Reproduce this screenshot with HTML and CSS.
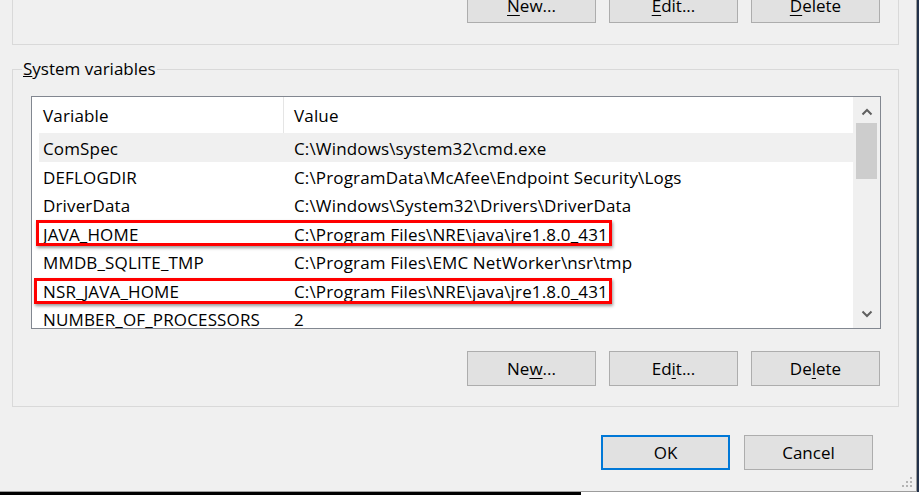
FILE: index.html
```html
<!DOCTYPE html>
<html lang="en">
<head>
<meta charset="utf-8">
<title>Environment Variables</title>
<link rel="stylesheet" href="styles.css">
</head>
<body>
<div class="screen">
  <div class="top">
    <div class="dialog">
      <div class="group user-group">
        <div class="btn-row">
          <button class="btn"><u>N</u>ew...</button>
          <button class="btn"><u>E</u>dit...</button>
          <button class="btn"><u>D</u>elete</button>
        </div>
      </div>

      <fieldset class="group sys-group">
        <legend><u>S</u>ystem variables</legend>
        <div class="list">
          <div class="list-main">
            <div class="list-head">
              <div class="hcell c1">Variable</div>
              <div class="hcell c2">Value</div>
            </div>
            <div class="rows">
              <div class="row selected"><div class="cell c1">ComSpec</div><div class="cell c2">C:\Windows\system32\cmd.exe</div></div>
              <div class="row"><div class="cell c1">DEFLOGDIR</div><div class="cell c2">C:\ProgramData\McAfee\Endpoint Security\Logs</div></div>
              <div class="row"><div class="cell c1">DriverData</div><div class="cell c2">C:\Windows\System32\Drivers\DriverData</div></div>
              <div class="row"><div class="cell c1">JAVA_HOME</div><div class="cell c2">C:\Program Files\NRE\java\jre1.8.0_431</div><span class="mark mark-a"></span></div>
              <div class="row"><div class="cell c1">MMDB_SQLITE_TMP</div><div class="cell c2">C:\Program Files\EMC NetWorker\nsr\tmp</div></div>
              <div class="row"><div class="cell c1">NSR_JAVA_HOME</div><div class="cell c2">C:\Program Files\NRE\java\jre1.8.0_431</div><span class="mark mark-b"></span></div>
              <div class="row"><div class="cell c1">NUMBER_OF_PROCESSORS</div><div class="cell c2">2</div></div>
            </div>
          </div>
          <div class="vscroll">
            <div class="sbtn sbtn-up">
              <svg width="12" height="8" viewBox="0 0 12 8"><polyline points="1.5,6.5 6,2 10.5,6.5" fill="none" stroke="#606060" stroke-width="2"/></svg>
            </div>
            <div class="thumb"></div>
            <div class="track"></div>
            <div class="sbtn sbtn-down">
              <svg width="12" height="8" viewBox="0 0 12 8"><polyline points="1.5,1.5 6,6 10.5,1.5" fill="none" stroke="#606060" stroke-width="2"/></svg>
            </div>
          </div>
        </div>
        <div class="btn-row sys-btns">
          <button class="btn">Ne<u>w</u>...</button>
          <button class="btn">Ed<u>i</u>t...</button>
          <button class="btn">De<u>l</u>ete</button>
        </div>
      </fieldset>

      <div class="dlg-btns">
        <button class="btn btn-default">OK</button>
        <button class="btn">Cancel</button>
      </div>

      <svg class="grip" width="12" height="12" viewBox="0 0 12 12">
        <rect x="8" y="0" width="2" height="2" fill="#b4b4b4"/>
        <rect x="4" y="4" width="2" height="2" fill="#b4b4b4"/>
        <rect x="8" y="4" width="2" height="2" fill="#b4b4b4"/>
        <rect x="0" y="8" width="2" height="2" fill="#b4b4b4"/>
        <rect x="4" y="8" width="2" height="2" fill="#b4b4b4"/>
        <rect x="8" y="8" width="2" height="2" fill="#b4b4b4"/>
      </svg>
    </div>
    <div class="desk-right"></div>
  </div>
  <div class="bottom-strip">
    <div class="taskbar"></div>
    <div class="bg-white"></div>
  </div>
</div>
</body>
</html>
```

FILE: styles.css
```css
* { box-sizing: border-box; }

html, body {
  margin: 0;
  padding: 0;
  background: #ffffff;
}

body {
  font-family: "Open Sans", "Noto Sans", "DejaVu Sans", sans-serif;
  font-size: 17px;
  color: #000;
  overflow: hidden;
}

.screen {
  width: 919px;
  height: 495px;
  display: flex;
  flex-direction: column;
}

.top {
  display: flex;
  height: 492px;
}

.dialog {
  position: relative;
  width: 917px;
  height: 492px;
  background: #f0f0f0;
  border-right: 1px solid #9c9c9c;
  border-bottom: 1px solid #9c9c9c;
  overflow: hidden;
}

.desk-right {
  width: 2px;
  background: #22314a;
}

.bottom-strip {
  display: flex;
  height: 3px;
}

.taskbar {
  width: 581px;
  background: #000;
}

.bg-white {
  flex: 1;
  background: #fff;
}

/* group boxes */
.group {
  border: 1px solid #d9d9d9;
  width: 887px;
}

.user-group {
  margin: -61px 0 0 12px;
  height: 106px;
  display: flex;
  align-items: flex-end;
  justify-content: flex-end;
  padding: 0 18px 21px 0;
}

.btn-row {
  display: flex;
  justify-content: flex-end;
  gap: 13px;
}

.sys-group {
  margin: 13px 0 0 12px;
  padding: 0;
  min-width: 0;
}

.sys-group legend {
  margin-left: 9px;
  padding: 0 1px;
  line-height: 22px;
  height: 22px;
}

/* list */
.list {
  margin: 16px 17px 0 18px;
  width: 850px;
  height: 233px;
  border: 1px solid #828790;
  background: #fff;
  display: flex;
}

.list-main {
  flex: 1;
  overflow: hidden;
  letter-spacing: 0.15px;
}

.list-head {
  height: 36px;
  display: flex;
}

.hcell {
  display: flex;
  align-items: center;
  padding-top: 1px;
  white-space: nowrap;
}

.hcell.c1 {
  width: 252px;
  padding-left: 11px;
  border-right: 1px solid #e5e5e5;
}

.hcell.c2 {
  padding-left: 10px;
}

.rows {
  padding-left: 7px;
}

.row {
  position: relative;
  height: 28.5px;
  display: flex;
  align-items: center;
  padding-top: 3px;
  white-space: nowrap;
}

.row.selected {
  background: #f0f0f0;
}

.cell.c1 {
  width: 252px;
  padding-left: 4px;
}

.cell.c2 {
  padding-left: 3px;
}

.mark {
  position: absolute;
  height: 26px;
  border: 3px solid #ff0000;
  box-shadow: 1px 2px 3px rgba(0, 0, 0, 0.4);
}

.mark-a {
  left: -3px;
  top: 1.5px;
  width: 576px;
}

.mark-b {
  left: -5px;
  top: 2.5px;
  width: 578px;
}

/* scrollbar */
.vscroll {
  width: 27px;
  background: #f0f0f0;
  display: flex;
  flex-direction: column;
}

.sbtn {
  height: 26px;
  display: flex;
  justify-content: center;
}

.sbtn-up {
  align-items: flex-end;
  padding-bottom: 7px;
}

.sbtn-down {
  align-items: flex-start;
  padding-top: 8px;
}

.thumb {
  height: 56px;
  width: 21px;
  margin-left: 3px;
  background: #cdcdcd;
}

.track {
  flex: 1;
}

/* buttons */
.btn {
  width: 129px;
  height: 35px;
  margin: 0;
  padding: 0;
  background: #e1e1e1;
  border: 1px solid #adadad;
  font-family: inherit;
  font-size: 17px;
  color: #000;
  line-height: 1;
}

.btn u {
  text-decoration-thickness: 1px;
  text-underline-offset: 3px;
}

.sys-btns {
  margin: 22px 18px 20px 0;
}

.dlg-btns {
  display: flex;
  justify-content: flex-end;
  gap: 14px;
  margin: 28px 43px 0 0;
}

.btn-default {
  border: 2px solid #0078d7;
}

.grip {
  position: absolute;
  right: 2px;
  bottom: 2px;
}
```
